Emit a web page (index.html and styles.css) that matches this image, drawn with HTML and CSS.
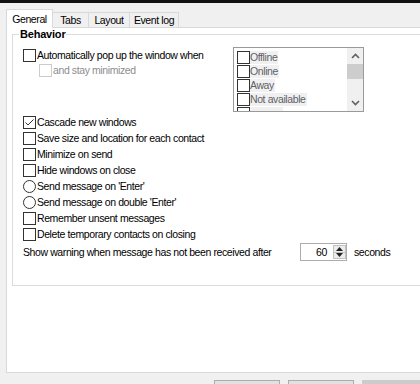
FILE: index.html
```html
<!DOCTYPE html>
<html>
<head>
<meta charset="utf-8">
<link rel="stylesheet" href="styles.css">
</head>
<body>
<div class="topbar"></div>
<div class="tabs">
  <div class="tab active">General</div>
  <div class="tab">Tabs</div>
  <div class="tab">Layout</div>
  <div class="tab">Event log</div>
</div>
<div class="panel">
  <fieldset class="group">
    <legend>Behavior</legend>
    <div class="top">
      <div class="leftcol">
        <div class="row first"><span class="cb"></span><span>Automatically pop up the window when</span></div>
        <div class="row sub"><span class="cb dis"></span><span class="distext">and stay minimized</span></div>
      </div>
      <div class="listbox">
        <div class="items">
          <div class="item"><span class="cb"></span><span class="itext">Offline</span></div>
          <div class="item"><span class="cb"></span><span class="itext">Online</span></div>
          <div class="item"><span class="cb"></span><span class="itext">Away</span></div>
          <div class="item"><span class="cb"></span><span class="itext">Not available</span></div>
          <div class="item"><span class="cb"></span><span class="itext blank"></span></div>
        </div>
        <div class="scrollbar">
          <div class="arrow"><svg width="9" height="6" viewBox="0 0 9 6"><path d="M1 5 L4.5 1.5 L8 5" fill="none" stroke="#606060" stroke-width="1.6"/></svg></div>
          <div class="thumb"></div>
          <div class="track"></div>
          <div class="arrow"><svg width="9" height="6" viewBox="0 0 9 6"><path d="M1 1 L4.5 4.5 L8 1" fill="none" stroke="#606060" stroke-width="1.6"/></svg></div>
        </div>
      </div>
    </div>
    <div class="opts">
      <div class="row"><span class="cb"><svg width="11" height="11" viewBox="0 0 11 11"><path d="M1.5 5.5 L4 8 L9.5 2.5" fill="none" stroke="#333" stroke-width="1"/></svg></span><span>Cascade new windows</span></div>
      <div class="row"><span class="cb"></span><span>Save size and location for each contact</span></div>
      <div class="row"><span class="cb"></span><span>Minimize on send</span></div>
      <div class="row"><span class="cb"></span><span>Hide windows on close</span></div>
      <div class="row"><span class="rb"></span><span>Send message on 'Enter'</span></div>
      <div class="row"><span class="rb"></span><span>Send message on double 'Enter'</span></div>
      <div class="row"><span class="cb"></span><span>Remember unsent messages</span></div>
      <div class="row"><span class="cb"></span><span>Delete temporary contacts on closing</span></div>
    </div>
    <div class="warn">
      <span class="wlabel">Show warning when message has not been received after</span>
      <div class="spin">
        <span class="val">60</span>
        <div class="spinbtns">
          <div class="sbtn"><svg width="7" height="4" viewBox="0 0 7 4"><path d="M0 4 L3.5 0 L7 4 Z" fill="#222"/></svg></div>
          <div class="sbtn"><svg width="7" height="4" viewBox="0 0 7 4"><path d="M0 0 L3.5 4 L7 0 Z" fill="#222"/></svg></div>
        </div>
      </div>
      <span class="unit">seconds</span>
    </div>
  </fieldset>
</div>
<div class="buttons">
  <div class="btn"></div>
  <div class="btn"></div>
  <div class="btn dark"></div>
</div>
</body>
</html>
```
FILE: styles.css
```css
html, body {
  margin: 0;
  padding: 0;
}
body {
  width: 420px;
  height: 384px;
  overflow: hidden;
  background: #f0f0f0;
  font-family: "Liberation Sans", Arial, sans-serif;
  font-size: 10.5px;
  letter-spacing: -0.4px;
  color: #000;
}
.topbar {
  height: 3px;
  background: #111;
}
.tabs {
  display: flex;
  align-items: flex-end;
  height: 19px;
  margin-top: 6px;
  margin-bottom: -1px;
  padding-left: 6px;
  position: relative;
  z-index: 1;
}
.tab {
  box-sizing: border-box;
  height: 16px;
  border: 1px solid #d9d9d9;
  border-left: none;
  background: #f0f0f0;
  display: flex;
  align-items: center;
  justify-content: center;
  line-height: 12px;
}
.tab:nth-child(2) { width: 36px; }
.tab:nth-child(3) { width: 41px; }
.tab:nth-child(4) { width: 49px; }
.tab.active {
  width: 47px;
  height: 19px;
  border: 1px solid #d9d9d9;
  border-bottom: none;
  background: #fff;
  padding-bottom: 1px;
}
.panel {
  box-sizing: border-box;
  height: 346px;
  margin-left: 6px;
  margin-right: -20px;
  border: 1px solid #d9d9d9;
  background: #fff;
  padding-left: 5px;
}
.group {
  margin: 0;
  padding: 0 0 24px 0;
  border: 1px solid #dcdcdc;
  min-inline-size: 0;
}
.group legend {
  margin-left: 6px;
  padding: 0 1px;
  font-weight: bold;
  font-size: 11px;
  line-height: 12px;
  letter-spacing: -0.2px;
}
.top {
  display: flex;
  margin-top: 7px;
  height: 65px;
  padding-left: 10px;
}
.leftcol {
  flex: 0 0 210px;
  display: flex;
  flex-direction: column;
}
.row {
  display: flex;
  align-items: center;
  height: 16px;
  white-space: nowrap;
}
.row.sub {
  height: 14px;
  padding-left: 16px;
}
.cb {
  box-sizing: border-box;
  width: 13px;
  height: 13px;
  border: 1px solid #333;
  background: #fff;
  flex: 0 0 13px;
  margin-right: 1px;
  display: flex;
  align-items: center;
  justify-content: center;
}
.cb.dis {
  border-color: #cccccc;
}
.distext {
  color: #8d8d8d;
}
.rb {
  box-sizing: border-box;
  width: 13px;
  height: 13px;
  border: 1px solid #333;
  border-radius: 50%;
  background: #fff;
  flex: 0 0 13px;
  margin-right: 1px;
}
.listbox {
  box-sizing: border-box;
  width: 131px;
  height: 65px;
  border: 1px solid #9a9a9a;
  display: flex;
  background: #fff;
}
.items {
  flex: 1;
  padding: 2px 0 0 3px;
  overflow: hidden;
}
.item {
  display: flex;
  align-items: center;
  height: 14px;
  white-space: nowrap;
}
.item .cb {
  margin-right: 0;
}
.itext {
  background: #f0f0f0;
  color: #5f5f66;
  padding: 0 1px 0 0;
  line-height: 13px;
}
.itext.blank {
  width: 32px;
  height: 13px;
}
.scrollbar {
  flex: 0 0 16px;
  background: #f0f0f0;
  display: flex;
  flex-direction: column;
}
.arrow {
  height: 16px;
  display: flex;
  align-items: center;
  justify-content: center;
}
.thumb {
  height: 15px;
  background: #cdcdcd;
}
.track {
  flex: 1;
}
.opts {
  margin-top: 2px;
  padding-left: 10px;
  display: flex;
  flex-direction: column;
}
.warn {
  display: flex;
  align-items: center;
  margin-top: 1px;
  height: 18px;
  padding-left: 10px;
  white-space: nowrap;
}
.wlabel {
  flex: 0 0 277px;
}
.spin {
  box-sizing: border-box;
  width: 47px;
  height: 18px;
  border: 1px solid #acacac;
  background: #fff;
  display: flex;
}
.val {
  flex: 0 0 32px;
  box-sizing: border-box;
  text-align: right;
  padding-right: 6px;
  line-height: 16px;
}
.spinbtns {
  flex: 0 0 13px;
  display: flex;
  flex-direction: column;
  padding: 1px 0;
}
.sbtn {
  flex: 1;
  box-sizing: border-box;
  background: #ececec;
  border: 1px solid #c2c2c2;
  display: flex;
  align-items: center;
  justify-content: center;
}
.sbtn + .sbtn {
  border-top: none;
}
.unit {
  margin-left: 7px;
}
.buttons {
  display: flex;
  justify-content: flex-end;
  gap: 8px;
  margin-top: 7px;
  margin-right: -8px;
}
.btn {
  box-sizing: border-box;
  width: 66px;
  height: 22px;
  background: #e1e1e1;
  border: 1px solid #adadad;
}
.btn.dark {
  background: #cccccc;
  border-color: #cccccc;
}
```
